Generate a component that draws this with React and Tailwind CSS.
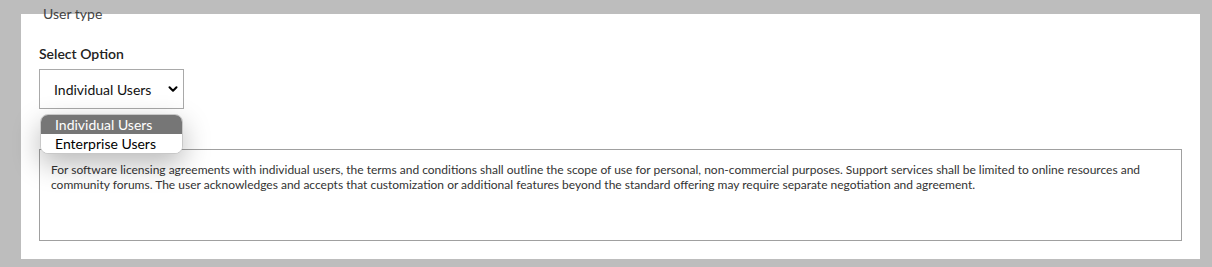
import { ChevronDown } from "lucide-react";

const description =
  "For software licensing agreements with individual users, the terms and conditions shall outline the scope of use for personal, non-commercial purposes. Support services shall be limited to online resources and community forums. The user acknowledges and accepts that customization or additional features beyond the standard offering may require separate negotiation and agreement.";

const options = ["Individual Users", "Enterprise Users"];

const App = () => {
  return (
    <div
      className="w-[1212px] h-[267px] bg-[#bdbdbd] pt-[14px] pl-[21px] pr-[12px] pb-[8px]"
      style={{ fontFamily: "Lato, 'Noto Sans', sans-serif" }}
    >
      <div className="bg-white h-full flex flex-col items-start pl-[18px] pr-[18px]">
        <div className="-mt-[8px] ml-[4px] text-[14px] leading-[15px] text-[#444]">
          User type
        </div>

        <div className="mt-[24px] text-[14px] leading-[18px] font-semibold text-[#222]">
          Select Option
        </div>

        {/* select with its open list */}
        <div className="relative mt-[6px] w-[145px]">
          <div className="h-[40px] border border-[#a9a9a9] flex items-center justify-between pl-[14px] pr-[3px] text-[14px] text-[#111]">
            <span>Individual Users</span>
            <ChevronDown size={14} strokeWidth={3.5} className="text-black" />
          </div>

          <div className="absolute left-[1px] top-[45px] w-[143px] bg-white rounded-[8px] overflow-hidden border border-[#c8c8c8] shadow-[0_10px_28px_rgba(0,0,0,0.28)] z-10">
            {options.map((opt, i) => (
              <div
                key={opt}
                className={`h-[19px] leading-[19px] pl-[14px] text-[14px] ${
                  i === 0 ? "bg-[#767676] text-white" : "bg-white text-black"
                }`}
              >
                {opt}
              </div>
            ))}
          </div>
        </div>

        <div className="mt-[40px] self-stretch h-[92px] border border-[#a0a0a0] px-[11px] pt-[12px] text-[12px] leading-[15px] text-[#333]">
          {description}
        </div>
      </div>
    </div>
  );
};

export default App;
